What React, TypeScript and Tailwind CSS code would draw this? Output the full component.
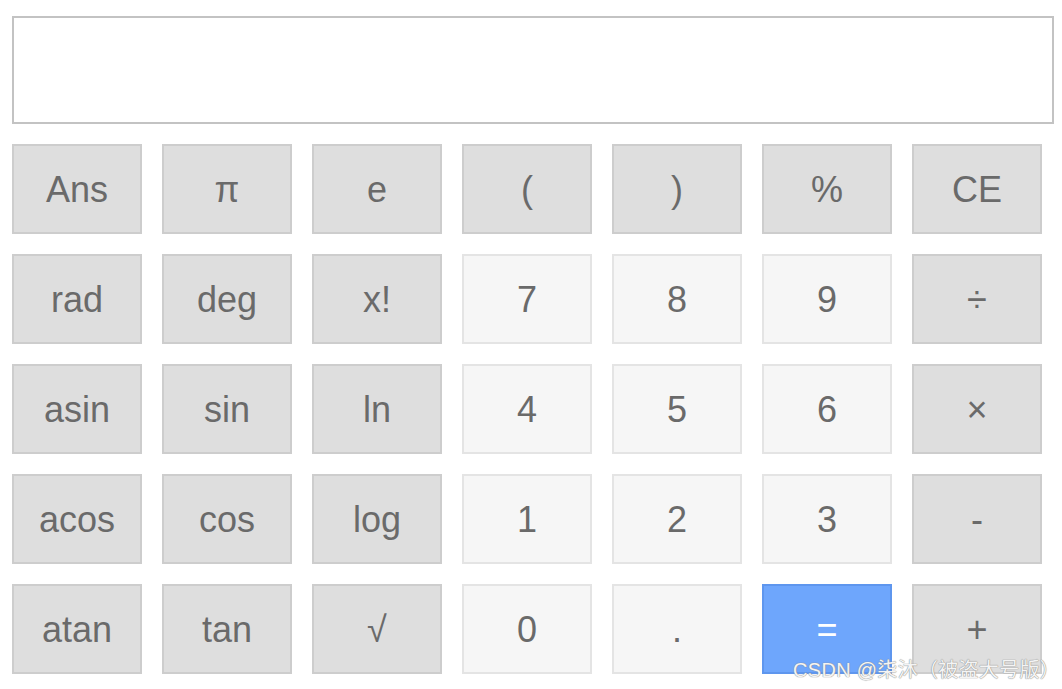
const keys: { label: string; kind: 'fn' | 'num' | 'eq' }[] = [
  { label: 'Ans', kind: 'fn' },
  { label: 'π', kind: 'fn' },
  { label: 'e', kind: 'fn' },
  { label: '(', kind: 'fn' },
  { label: ')', kind: 'fn' },
  { label: '%', kind: 'fn' },
  { label: 'CE', kind: 'fn' },
  { label: 'rad', kind: 'fn' },
  { label: 'deg', kind: 'fn' },
  { label: 'x!', kind: 'fn' },
  { label: '7', kind: 'num' },
  { label: '8', kind: 'num' },
  { label: '9', kind: 'num' },
  { label: '÷', kind: 'fn' },
  { label: 'asin', kind: 'fn' },
  { label: 'sin', kind: 'fn' },
  { label: 'ln', kind: 'fn' },
  { label: '4', kind: 'num' },
  { label: '5', kind: 'num' },
  { label: '6', kind: 'num' },
  { label: '×', kind: 'fn' },
  { label: 'acos', kind: 'fn' },
  { label: 'cos', kind: 'fn' },
  { label: 'log', kind: 'fn' },
  { label: '1', kind: 'num' },
  { label: '2', kind: 'num' },
  { label: '3', kind: 'num' },
  { label: '-', kind: 'fn' },
  { label: 'atan', kind: 'fn' },
  { label: 'tan', kind: 'fn' },
  { label: '√', kind: 'fn' },
  { label: '0', kind: 'num' },
  { label: '.', kind: 'num' },
  { label: '=', kind: 'eq' },
  { label: '+', kind: 'fn' },
]

const styleFor = (kind: string) => {
  switch (kind) {
    case 'num': return 'bg-[#f6f6f6] border-[#e4e4e4] text-[#6a6a6a]'
    case 'eq': return 'bg-[#6ea6fc] border-[#5e96ee] text-white'
    default: return 'bg-[#dedede] border-[#cdcdcd] text-[#6a6a6a]'
  }
}

export default function App() {
  return (
    <div className="relative w-[1062px] h-[689px] bg-white overflow-hidden font-['Liberation_Sans',Arial,sans-serif]">
      <div className="flex flex-col gap-[20px] pl-[12px] pt-[16px]">
        <div className="w-[1042px] h-[108px] border-2 border-[#c3c3c3] bg-white" />
        <div className="grid grid-cols-[repeat(7,130px)] auto-rows-[90px] gap-[20px]">
          {keys.map(k => (
            <button
              key={k.label}
              className={`flex items-center justify-center border-2 pt-[2px] text-[36px] leading-none ${styleFor(k.kind)}`}
            >
              {k.label}
            </button>
          ))}
        </div>
      </div>
      <div className="absolute left-[793px] top-[657px] text-[20px] tracking-[0.3px] leading-[26px] text-[#f4f4f4] [text-shadow:0_0_1px_#8a8a8a,0_0_1px_#8a8a8a] font-['Liberation_Sans','Noto_Sans_CJK_SC',sans-serif] whitespace-nowrap">
        CSDN @柒沐（被盗大号版）
      </div>
    </div>
  )
}
